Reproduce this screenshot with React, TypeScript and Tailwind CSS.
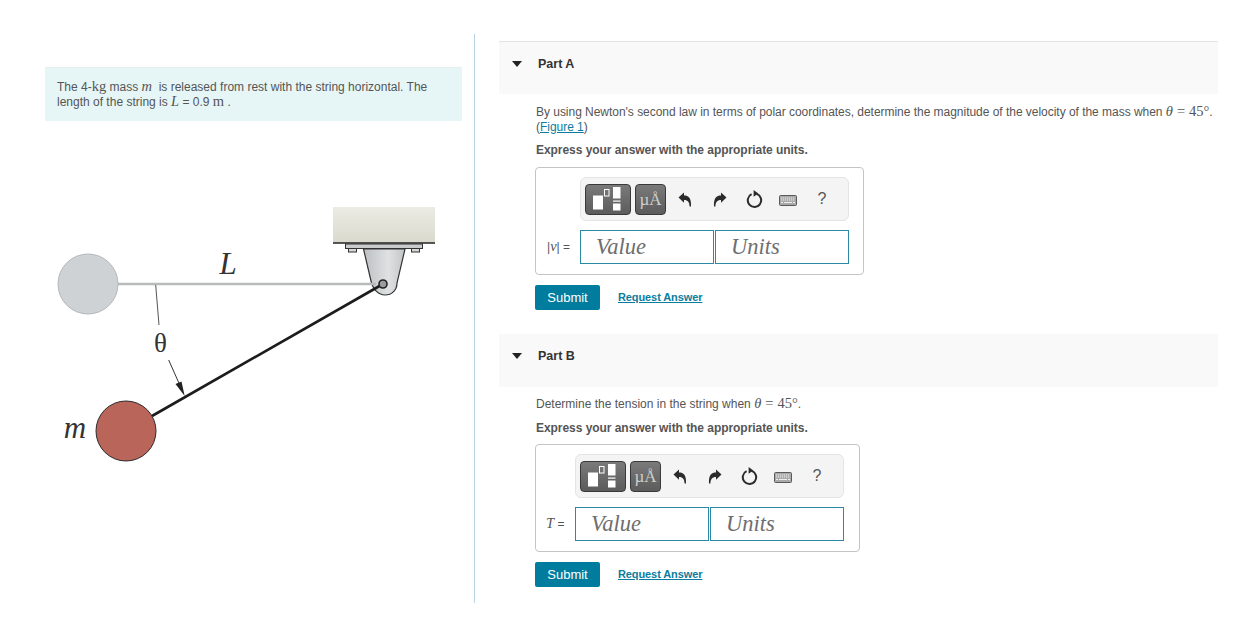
const sans = "font-['Liberation_Sans',Arial,sans-serif]";

function Serif({ children, italic = false }: { children: React.ReactNode; italic?: boolean }) {
  return (
    <span className={`font-['Liberation_Serif',serif] text-[14.5px] leading-[0] ${italic ? "italic" : ""}`}>
      {children}
    </span>
  );
}

function Angle() {
  return (
    <>
      <Serif italic>θ</Serif>
      <span className="mx-[4px]">
        <Serif>=</Serif>
      </span>
      <Serif>45°</Serif>
    </>
  );
}

function Figure() {
  return (
    <svg width="417" height="280" viewBox="45 195 417 280" className="block mt-[74px]">
      <defs>
        <linearGradient id="ceiling" x1="0" y1="0" x2="0" y2="1">
          <stop offset="0" stopColor="#ecebe4" />
          <stop offset="1" stopColor="#d9d9cd" />
        </linearGradient>
        <linearGradient id="bracket" x1="0" y1="0" x2="1" y2="0">
          <stop offset="0" stopColor="#bcc0c2" />
          <stop offset="0.6" stopColor="#dfe1e2" />
          <stop offset="1" stopColor="#c2c5c7" />
        </linearGradient>
      </defs>

      <rect x="333" y="207" width="102" height="36" fill="url(#ceiling)" />
      <line x1="333" y1="243" x2="435" y2="243" stroke="#222" strokeWidth="1.6" />
      <rect x="345.5" y="244" width="77" height="4.5" fill="#c9cbcc" stroke="#333" strokeWidth="1" />
      <rect x="348.5" y="248.5" width="8" height="3.5" fill="#d5d6d6" stroke="#333" strokeWidth="1" />
      <rect x="411.5" y="248.5" width="8" height="3.5" fill="#d5d6d6" stroke="#333" strokeWidth="1" />
      <path
        d="M363.5 249 L371 281 C373 290 379 295 385 295 C392 295 397 290 397 283 L405 249 Z"
        fill="url(#bracket)"
        stroke="#333"
        strokeWidth="1.2"
      />

      <line x1="117" y1="284" x2="376" y2="284" stroke="#b9bbbb" strokeWidth="2.4" />
      <circle cx="88" cy="284" r="30" fill="#cfd2d4" stroke="#b5b8ba" strokeWidth="1" />
      <line x1="152" y1="416" x2="383" y2="284" stroke="#1c1c1c" strokeWidth="2.6" />
      <circle cx="383" cy="284" r="4" fill="#9a9c9e" stroke="#222" strokeWidth="1.6" />
      <circle cx="126" cy="431" r="30" fill="#ba655a" stroke="#2b2b2b" strokeWidth="1" />

      <line x1="155.7" y1="285" x2="159" y2="325" stroke="#555" strokeWidth="1" />
      <line x1="168.7" y1="360" x2="182" y2="390" stroke="#333" strokeWidth="1" />
      <path d="M184.7 396 L175.5 384 L181.5 381.5 Z" fill="#222" />

      <text x="160.5" y="352" textAnchor="middle" fontFamily="'Liberation Serif', serif" fontSize="27" fill="#333">θ</text>
      <text x="228" y="274" textAnchor="middle" fontFamily="'Liberation Serif', serif" fontStyle="italic" fontSize="31" fill="#333">L</text>
      <text x="75" y="438" textAnchor="middle" fontFamily="'Liberation Serif', serif" fontStyle="italic" fontSize="31" fill="#333">m</text>
    </svg>
  );
}

function TemplateIcon() {
  return (
    <svg width="28" height="24" viewBox="0 0 28 24" className="mr-[3px]">
      <rect x="0" y="8.5" width="10" height="14" fill="#fff" />
      <rect x="11.5" y="2.5" width="4.5" height="6.5" fill="none" stroke="#fff" strokeWidth="1" />
      <rect x="20" y="0" width="7.5" height="11.5" fill="#fff" />
      <rect x="20" y="13.5" width="7.5" height="1.2" fill="#fff" />
      <rect x="20" y="16.5" width="7.5" height="7" fill="#fff" />
    </svg>
  );
}

function ToolButton({ className, children }: { className: string; children: React.ReactNode }) {
  return (
    <div
      className={`flex items-center justify-center h-[31px] rounded-[4px] border border-[#3a3a3a] bg-gradient-to-b from-[#7a7a7a] to-[#5c5c5c] ${className}`}
    >
      {children}
    </div>
  );
}

function UndoIcon({ flip = false }: { flip?: boolean }) {
  return (
    <svg width="14" height="15" viewBox="0 0 14 15" className={flip ? "-scale-x-100" : ""}>
      <path
        d="M0.5 5.5 L6 0.5 L6 3.5 C10.5 3.5 13.5 6 13 14.5 L11.6 14.5 C11.5 10.5 10 8 6 8 L6 10.8 Z"
        fill="#2b2b2b"
      />
    </svg>
  );
}

function ResetIcon() {
  return (
    <svg width="17" height="18" viewBox="0 0 17 18">
      <path d="M5.6 4.2 A6.7 6.7 0 1 0 10.6 3.9" fill="none" stroke="#2b2b2b" strokeWidth="2" />
      <path d="M7.6 0 L12.4 3.6 L7.6 6.8 Z" fill="#2b2b2b" />
    </svg>
  );
}

function KeyboardIcon() {
  return (
    <svg width="18" height="11" viewBox="0 0 18 11">
      <rect x="0.5" y="0.5" width="17" height="10" rx="1" fill="#a9a9a9" stroke="#5a5a5a" />
      <path d="M2 3 H16 M2 5 H16" stroke="#eee" strokeWidth="1" strokeDasharray="1.2 0.8" />
      <path d="M2 7.5 H4 M5 7.5 H13 M14 7.5 H16" stroke="#eee" strokeWidth="1.2" />
    </svg>
  );
}

function AnswerBox({
  boxClass,
  rowClass,
  labelClass,
  label,
}: {
  boxClass: string;
  rowClass: string;
  labelClass: string;
  label: React.ReactNode;
}) {
  return (
    <div className={`h-[108px] -ml-[1px] rounded-[4px] border border-[#c4c4c4] pt-[9px] ${boxClass}`}>
      <div className={`flex flex-col w-[269px] ${rowClass}`}>
        <div className="flex items-center h-[44px] rounded-[6px] border border-[#e4e4e4] bg-[#f4f4f4] pl-[4px]">
          <ToolButton className="w-[46px]">
            <TemplateIcon />
          </ToolButton>
          <ToolButton className="w-[31px] ml-[4px]">
            <span className="font-['Liberation_Serif',serif] text-[17px] leading-none text-[#cfcfcf]">µÅ</span>
          </ToolButton>
          <div className="w-[14px] ml-[12px] flex justify-center">
            <UndoIcon />
          </div>
          <div className="w-[14px] ml-[21px] flex justify-center">
            <UndoIcon flip />
          </div>
          <div className="w-[17px] ml-[19px] flex justify-center">
            <ResetIcon />
          </div>
          <div className="w-[18px] ml-[16px] mt-[3px] flex justify-center">
            <KeyboardIcon />
          </div>
          <span className="ml-[20px] w-[10px] text-center text-[16px] leading-none text-[#555]">?</span>
        </div>
        <div className="relative flex gap-[1px] mt-[9px]">
          <span className={`absolute top-[8px] whitespace-nowrap text-[12px] text-[#555] ${labelClass}`}>{label}</span>
          <ValueField text="Value" />
          <ValueField text="Units" />
        </div>
      </div>
    </div>
  );
}

function ValueField({ text }: { text: string }) {
  return (
    <div className="flex-1 h-[34px] border border-[#2a8aa6] bg-white pl-[15px] font-['Liberation_Serif',serif] italic text-[22.5px] leading-[32px] text-[#6e6e6e]">
      {text}
    </div>
  );
}

function Actions() {
  return (
    <div className="flex items-center mt-[10px] -ml-[1px]">
      <div className="w-[65px] h-[25px] rounded-[2px] bg-[#007d9e] text-white text-[13px] leading-[25px] text-center">
        Submit
      </div>
      <a className="ml-[18px] text-[11px] font-bold tracking-[-0.1px] text-[#0b7d9e] underline">Request Answer</a>
    </div>
  );
}

function PartHeader({ title, className }: { title: string; className: string }) {
  return (
    <div className={`flex h-[53px] bg-[#f9f9f9] pt-[14px] pl-[13px] ${className}`}>
      <svg width="10" height="6" viewBox="0 0 10 6" className="mt-[5px]">
        <path d="M0 0 H10 L5 6 Z" fill="#222" />
      </svg>
      <span className="ml-[16px] text-[12.5px] leading-[16px] font-bold text-[#333]">{title}</span>
    </div>
  );
}

export default function App() {
  return (
    <div className={`${sans} w-[1241px] h-[627px] bg-white pt-[34px] flex text-[12px] text-[#555] overflow-hidden`}>
      <div className="w-[475px] h-[569px] border-r border-[#b9d5e3] pl-[45px] pr-[12px] pt-[33px]">
        <div className="h-[54px] border-t border-[#e6eeee] bg-[#e6f6f6] px-[12px] pt-[12px] leading-[14.5px]">
          The 4-<Serif>kg</Serif> mass <Serif italic>m</Serif>&nbsp; is released from rest with the string horizontal. The
          <br />
          length of the string is <Serif italic>L</Serif> = 0.9 <Serif>m</Serif> .
        </div>
        <Figure />
      </div>

      <div className="w-[719px] ml-[24px] pt-[7px]">
        <PartHeader title="Part A" className="border-t border-[#e4e4e4]" />
        <div className="pl-[37px] pt-[11px]">
          <p className="leading-[14.5px] whitespace-nowrap tracking-[-0.03px]">
            By using Newton's second law in terms of polar coordinates, determine the magnitude of the velocity of the mass when{" "}
            <Angle />.
            <br />
            (<a className="text-[#0b7d9e] underline">Figure 1</a>)
          </p>
          <p className="mt-[9px] font-bold leading-[15px] tracking-[-0.05px]">Express your answer with the appropriate units.</p>
          <AnswerBox
            boxClass="w-[329px] mt-[9px]"
            rowClass="ml-[44px]"
            labelClass="-left-[33px]"
            label={
              <>
                |<Serif italic>v</Serif>| =
              </>
            }
          />
          <Actions />
        </div>

        <div className="mt-[24px]">
          <PartHeader title="Part B" className="" />
        </div>
        <div className="pl-[37px] pt-[9px]">
          <p className="leading-[16px]">
            Determine the tension in the string when <Angle />.
          </p>
          <p className="mt-[9px] font-bold leading-[15px] tracking-[-0.05px]">Express your answer with the appropriate units.</p>
          <AnswerBox
            boxClass="w-[325px] mt-[8px]"
            rowClass="ml-[39px]"
            labelClass="-left-[29px]"
            label={
              <>
                <Serif italic>T</Serif> =
              </>
            }
          />
          <Actions />
        </div>
      </div>
    </div>
  );
}
